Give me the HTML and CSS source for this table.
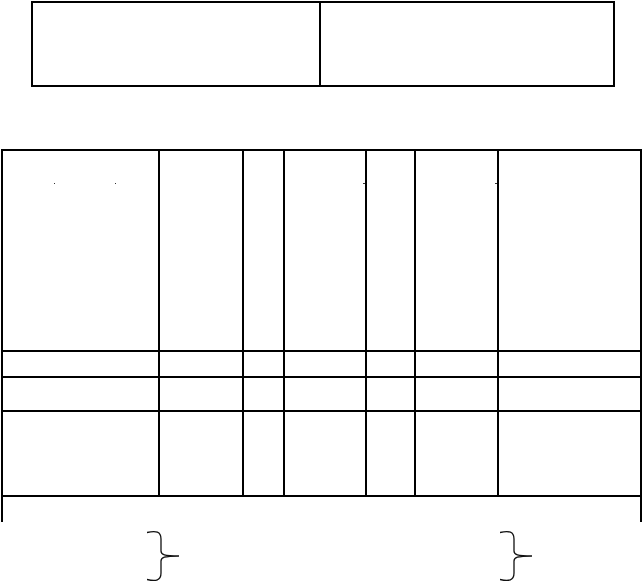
FILE: index.html
```html
<!DOCTYPE html>
<html lang="en">
<head>
<meta charset="utf-8">
<title>Form</title>
<link rel="stylesheet" href="styles.css">
</head>
<body>
<div class="page">
  <div class="top-box">
    <div class="cell"></div>
    <div class="cell"></div>
  </div>

  <div class="grid-table">
    <div class="cell head c1"><span class="dot d1"></span><span class="dot d2"></span></div>
    <div class="cell head"></div>
    <div class="cell head"></div>
    <div class="cell head tick-cell"><span class="tick"></span></div>
    <div class="cell head"></div>
    <div class="cell head tick-cell"><span class="tick"></span></div>
    <div class="cell head"></div>

    <div class="cell"></div><div class="cell"></div><div class="cell"></div><div class="cell"></div><div class="cell"></div><div class="cell"></div><div class="cell"></div>
    <div class="cell"></div><div class="cell"></div><div class="cell"></div><div class="cell"></div><div class="cell"></div><div class="cell"></div><div class="cell"></div>
    <div class="cell"></div><div class="cell"></div><div class="cell"></div><div class="cell"></div><div class="cell"></div><div class="cell"></div><div class="cell"></div>

    <div class="cell foot"></div>
  </div>

  <div class="braces">
    <svg class="brace" width="34" height="52" viewBox="0 0 34 52" aria-hidden="true">
      <path d="M0,2.5 C9,0.5 14,1.5 14,9 L14,21 C14,24.5 17,26 32,26 C17,26 14,27.5 14,31 L14,43 C14,50.5 9,51.5 0,49.5" fill="none" stroke="#111" stroke-width="1.3"/>
    </svg>
    <svg class="brace" width="34" height="52" viewBox="0 0 34 52" aria-hidden="true">
      <path d="M0,2.5 C9,0.5 14,1.5 14,9 L14,21 C14,24.5 17,26 32,26 C17,26 14,27.5 14,31 L14,43 C14,50.5 9,51.5 0,49.5" fill="none" stroke="#111" stroke-width="1.3"/>
    </svg>
  </div>
</div>
</body>
</html>
```

FILE: styles.css
```css
html, body {
  margin: 0;
  padding: 0;
  background: #fff;
  font-family: "Liberation Sans", Arial, sans-serif;
}

.page {
  width: 643px;
  height: 582px;
  overflow: hidden;
}

.top-box {
  display: grid;
  grid-template-columns: 286px 292px;
  grid-template-rows: 82px;
  gap: 2px;
  padding: 2px;
  background: #000;
  width: max-content;
  margin: 1px 0 0 31px;
}

.cell {
  background: #fff;
}

.grid-table {
  display: grid;
  grid-template-columns: 155px 82px 39px 80px 47px 81px 141px;
  grid-template-rows: 199px 24px 32px 83px 25px;
  gap: 2px;
  padding: 2px 2px 0 2px;
  background: #000;
  width: max-content;
  margin: 62px 0 0 1px;
}

.foot {
  grid-column: 1 / -1;
}

.c1 {
  position: relative;
}

.dot {
  position: absolute;
  top: 32px;
  width: 1px;
  height: 1px;
  background: #333;
}
.d1 { left: 51px; }
.d2 { left: 112px; }

.tick-cell {
  position: relative;
}

.tick {
  position: absolute;
  right: 0;
  top: 32px;
  width: 2px;
  height: 1px;
  background: #333;
}

.braces {
  display: flex;
  gap: 319px;
  padding: 8px 0 0 147px;
}

.brace {
  display: block;
}
```
